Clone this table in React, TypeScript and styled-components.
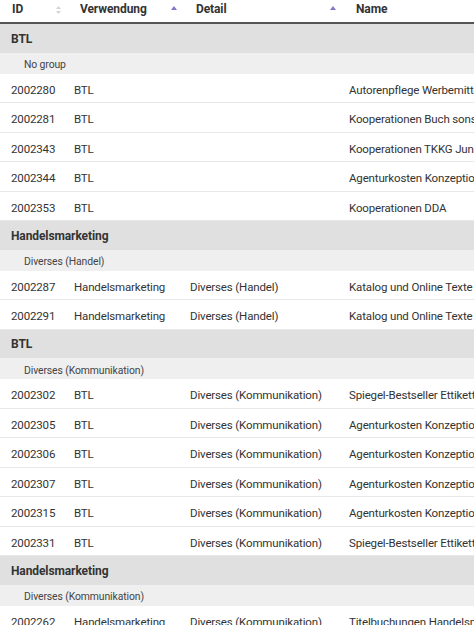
import React from "react";
import styled, { createGlobalStyle } from "styled-components";

const Global = createGlobalStyle`
  html, body { margin: 0; padding: 0; background: #fff; overflow: hidden; }
  body { font-family: Roboto, "Noto Sans", sans-serif; font-size: 11.5px; letter-spacing: -0.15px; color: #333; }
`;

const COLS = "63px 116px 159px 320px";

const Table = styled.div`
  width: 658px;
`;

const HeaderRow = styled.div`
  display: grid;
  grid-template-columns: ${COLS};
  height: 22px;
  border-bottom: 2px solid #555;
  background: #fff;
`;

const HeaderCell = styled.div<{ $pad: number }>`
  display: flex;
  align-items: flex-start;
  justify-content: space-between;
  padding-left: ${(p) => p.$pad}px;
  padding-right: 2px;
  padding-top: 1px;
  font-weight: 700;
  font-size: 12px;
  letter-spacing: -0.1px;
  line-height: 16px;
  color: #333;
`;

const SortIcon = styled.svg`
  margin-top: 5px;
  flex: none;
`;

const GroupRow = styled.div`
  height: 28.5px;
  display: flex;
  align-items: center;
  padding-left: 11px;
  padding-top: 1px;
  box-sizing: border-box;
  background: #e0e0e0;
  font-weight: 700;
  font-size: 12px;
  letter-spacing: -0.1px;
  color: #333;
`;

const SubGroupRow = styled.div`
  height: 21px;
  display: flex;
  align-items: center;
  padding-left: 24px;
  padding-top: 3px;
  box-sizing: border-box;
  background: #efefef;
  font-size: 10.4px;
  letter-spacing: -0.1px;
  color: #444;
`;

const DataRow = styled.div`
  display: grid;
  grid-template-columns: ${COLS};
  height: 29.5px;
  box-sizing: border-box;
  padding-top: 4px;
  border-bottom: 1px solid #e8e8e8;
  background: #fff;
  align-items: center;
`;

const Cell = styled.div`
  padding-left: 11px;
  white-space: nowrap;
  overflow: hidden;
  color: #333;
`;

const BothSort = () => (
  <SortIcon width="5" height="8" viewBox="0 0 5 8">
    <path d="M2.5 0 L5 3 L0 3 Z" fill="#d4d4d4" />
    <path d="M2.5 8 L5 5 L0 5 Z" fill="#d4d4d4" />
  </SortIcon>
);

const UpSort = () => (
  <SortIcon width="6" height="8" viewBox="0 0 6 8">
    <path d="M3 0 L6 4 L0 4 Z" fill="#8574c8" />
  </SortIcon>
);

type Row = [string, string, string, string];
type Block = { group: string; sub: string; rows: Row[] };

const blocks: Block[] = [
  {
    group: "BTL",
    sub: "No group",
    rows: [
      ["2002280", "BTL", "", "Autorenpflege Werbemittel"],
      ["2002281", "BTL", "", "Kooperationen Buch sonstige"],
      ["2002343", "BTL", "", "Kooperationen TKKG Junior"],
      ["2002344", "BTL", "", "Agenturkosten Konzeption"],
      ["2002353", "BTL", "", "Kooperationen DDA"],
    ],
  },
  {
    group: "Handelsmarketing",
    sub: "Diverses (Handel)",
    rows: [
      ["2002287", "Handelsmarketing", "Diverses (Handel)", "Katalog und Online Texte"],
      ["2002291", "Handelsmarketing", "Diverses (Handel)", "Katalog und Online Texte"],
    ],
  },
  {
    group: "BTL",
    sub: "Diverses (Kommunikation)",
    rows: [
      ["2002302", "BTL", "Diverses (Kommunikation)", "Spiegel-Bestseller Ettiketten"],
      ["2002305", "BTL", "Diverses (Kommunikation)", "Agenturkosten Konzeption"],
      ["2002306", "BTL", "Diverses (Kommunikation)", "Agenturkosten Konzeption"],
      ["2002307", "BTL", "Diverses (Kommunikation)", "Agenturkosten Konzeption"],
      ["2002315", "BTL", "Diverses (Kommunikation)", "Agenturkosten Konzeption"],
      ["2002331", "BTL", "Diverses (Kommunikation)", "Spiegel-Bestseller Ettiketten"],
    ],
  },
  {
    group: "Handelsmarketing",
    sub: "Diverses (Kommunikation)",
    rows: [
      ["2002262", "Handelsmarketing", "Diverses (Kommunikation)", "Titelbuchungen Handelsmarketing"],
    ],
  },
];

export default function App() {
  return (
    <>
      <Global />
      <Table>
        <HeaderRow>
          <HeaderCell $pad={12}>
            <span>ID</span>
            <BothSort />
          </HeaderCell>
          <HeaderCell $pad={17}>
            <span>Verwendung</span>
            <UpSort />
          </HeaderCell>
          <HeaderCell $pad={17}>
            <span>Detail</span>
            <UpSort />
          </HeaderCell>
          <HeaderCell $pad={18}>
            <span>Name</span>
          </HeaderCell>
        </HeaderRow>
        {blocks.map((b, i) => (
          <React.Fragment key={i}>
            <GroupRow>{b.group}</GroupRow>
            <SubGroupRow>{b.sub}</SubGroupRow>
            {b.rows.map((r) => (
              <DataRow key={r[0]}>
                {r.map((c, j) => (
                  <Cell key={j}>{c}</Cell>
                ))}
              </DataRow>
            ))}
          </React.Fragment>
        ))}
      </Table>
    </>
  );
}
